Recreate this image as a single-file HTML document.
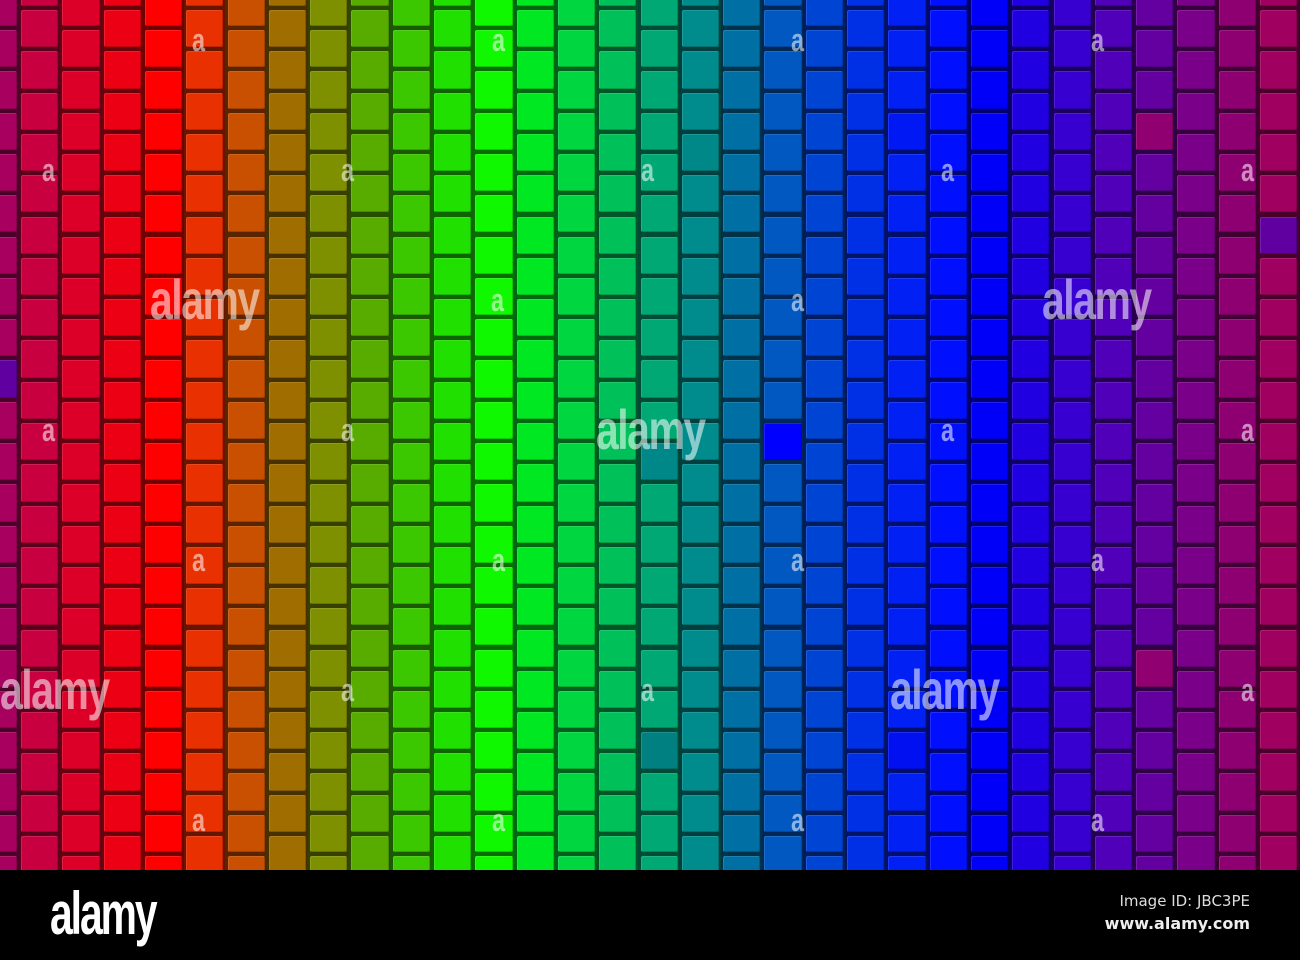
<!DOCTYPE html>
<html><head><meta charset="utf-8"><style>
html,body{margin:0;padding:0;width:1300px;height:960px;overflow:hidden;background:#000}
#g{position:absolute;left:0;top:0;width:1300px;height:870px;overflow:hidden;background:#300018}
.t{position:absolute;border-radius:2px;box-shadow:inset 1px 1px 0 rgba(255,255,255,.12),inset -1px -1px 0 rgba(0,0,0,.18)}
.col{position:absolute;top:0;height:870px}
.wm{position:absolute;color:rgba(255,255,255,.55);font-family:"Liberation Sans",sans-serif;font-weight:bold;letter-spacing:-2px;transform:scaleX(.73);transform-origin:left top}
.big{font-size:56px;line-height:56px}
.sm{font-size:32px;line-height:32px}
#f{position:absolute;left:0;top:870px;width:1300px;height:90px;background:#000}
</style></head><body>
<div id="g"></div>
<div id="f">
<div style="position:absolute;left:50px;top:14px;color:#fff;font:bold 60px/60px 'Liberation Sans',sans-serif;letter-spacing:-3px;transform:scaleX(.68);transform-origin:left top">alamy</div>
<div style="position:absolute;right:50px;top:22px;color:#ddd;font:15px/18px 'DejaVu Sans',sans-serif;text-align:right">Image ID: JBC3PE</div>
<div style="position:absolute;right:50px;top:44px;color:#eee;font:bold 16px/20px 'DejaVu Sans',sans-serif;text-align:right">www.alamy.com</div>
</div>
<script>
var cols=["#a8005e","#c80040","#dc0028","#ec0014","#ff0000","#e83000","#c85000","#a06e00","#7e9000","#58ac00","#3cc800","#20e000","#10f800","#00e822","#00d640","#00c05a","#00a874","#008c8c","#0070a4","#0058c0","#0044d4","#0030e6","#0020f4","#0010ff","#0000f8","#2000e0","#3800d0","#5000b8","#6400a0","#7a008a","#8e0072","#a00060"];
var g=document.getElementById('g');var P=41.3;
function dk(h){var n=parseInt(h.slice(1),16);var r=(n>>16)*.45|0,gg=((n>>8)&255)*.45|0,b=(n&255)*.45|0;return 'rgb('+r+','+gg+','+b+')';}
var special={"16,445":"#008888","19,422":"#0000ff","16,733":"#008080","22,113":"#0018f4","28,113":"#900070","31,215":"#6000a0","0,360":"#6000a0","28,650":"#900070","22,733":"#0010f0","17,133":"#008888"};
for(var i=0;i<32;i++){
 var x0=i==0?-22.3:19+P*(i-1);
 var c=document.createElement('div');c.className='col';c.style.left=(x0-0.5)+'px';c.style.width=(P+1)+'px';c.style.background=dk(cols[i]);g.appendChild(c);
 var off=(i%2==0)?28:8;
 for(var y=off-P;y<880;y+=P){
  var t=document.createElement('div');t.className='t';
  t.style.left=(x0+2)+'px';t.style.top=(y+2)+'px';t.style.width=(P-4)+'px';t.style.height=(P-4)+'px';
  var col=cols[i];
  for(var k in special){var s=k.split(',');if(+s[0]==i&&Math.abs(+s[1]-y)<22)col=special[k];}
  t.style.background=col;g.appendChild(t);
 }
}
function wm(cls,txt,x,y){var d=document.createElement('div');d.className='wm '+cls;d.textContent=txt;d.style.left=x+'px';d.style.top=y+'px';g.appendChild(d);}
[[150,272],[1042,272],[596,402],[0,662],[890,662]].forEach(function(p){wm('big','alamy',p[0],p[1]);});
var sm=[[42,[192,492,791,1091]],[172,[42,341,641,941,1241]],[302,[491,791]],[432,[42,341,941,1241]],[562,[192,492,791,1091]],[692,[341,641,1241]],[822,[192,492,791,1091]]];
sm.forEach(function(r){r[1].forEach(function(x){wm('sm','a',x,r[0]-18);});});
</script>
</body></html>
